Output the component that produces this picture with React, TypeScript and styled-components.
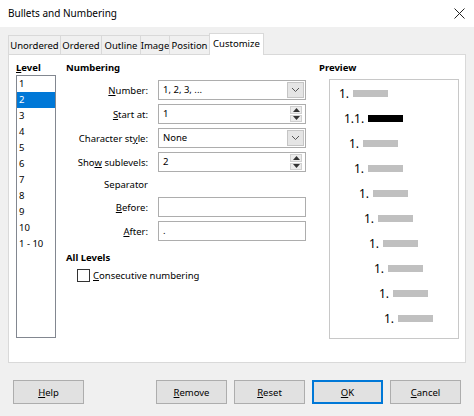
import React from "react";
import styled, { createGlobalStyle } from "styled-components";

const GlobalStyle = createGlobalStyle`
    html, body {
        margin: 0;
        padding: 0;
        background: #f0f0f0;
    }
    body {
        font-family: "Segoe UI", "Noto Sans", "Open Sans", sans-serif;
        font-size: 9.5px;
        color: #000;
    }
`;

const levels = ["1", "2", "3", "4", "5", "6", "7", "8", "9", "10", "1 - 10"];

const tabs = [
    { label: "Unordered", w: 53 },
    { label: "Ordered", w: 42 },
    { label: "Outline", w: 40 },
    { label: "Image", w: 30 },
    { label: "Position", w: 41 },
    { label: "Customize", w: 55, active: true },
];

const previewRows = [
    { text: "1.", indent: 10 },
    { text: "1.1.", indent: 15, dark: true },
    { text: "1.", indent: 20 },
    { text: "1.", indent: 25 },
    { text: "1.", indent: 30 },
    { text: "1.", indent: 35 },
    { text: "1.", indent: 40 },
    { text: "1.", indent: 45 },
    { text: "1.", indent: 50 },
    { text: "1.", indent: 55 },
];

function Chevron() {
    return (
        <svg width="9" height="6" viewBox="0 0 9 6">
            <path d="M1 1 L4.5 4.5 L8 1" fill="none" stroke="#555" strokeWidth="1" />
        </svg>
    );
}

function SpinArrows() {
    return (
        <SpinBox>
            <SpinHalf>
                <svg width="7" height="4" viewBox="0 0 7 4">
                    <path d="M0 4 L3.5 0 L7 4 Z" fill="#333" />
                </svg>
            </SpinHalf>
            <SpinHalf>
                <svg width="7" height="4" viewBox="0 0 7 4">
                    <path d="M0 0 L3.5 4 L7 0 Z" fill="#333" />
                </svg>
            </SpinHalf>
        </SpinBox>
    );
}

function App() {
    return (
        <Window>
            <GlobalStyle />
            <TitleBar>
                <span>Bullets and Numbering</span>
                <CloseIcon>
                    <svg width="11" height="11" viewBox="0 0 11 11">
                        <path d="M0.5 0.5 L10.5 10.5 M10.5 0.5 L0.5 10.5" stroke="#222" strokeWidth="1" />
                    </svg>
                </CloseIcon>
            </TitleBar>
            <Body>
                <TabBar>
                    {tabs.map((t) => (
                        <Tab key={t.label} $w={t.w} $active={!!t.active}>
                            {t.label}
                        </Tab>
                    ))}
                </TabBar>
                <TabPage>
                    <LevelColumn>
                        <BoldLabel>
                            <u>L</u>evel
                        </BoldLabel>
                        <LevelList>
                            {levels.map((l) => (
                                <LevelItem key={l} $selected={l === "2"}>
                                    {l}
                                </LevelItem>
                            ))}
                        </LevelList>
                    </LevelColumn>

                    <NumberingColumn>
                        <BoldLabel>Numbering</BoldLabel>
                        <FormGrid>
                            <FieldLabel>
                                <u>N</u>umber:
                            </FieldLabel>
                            <Field>
                                <FieldText>1, 2, 3, ...</FieldText>
                                <DropButton>
                                    <Chevron />
                                </DropButton>
                            </Field>

                            <FieldLabel>
                                <u>S</u>tart at:
                            </FieldLabel>
                            <Field>
                                <FieldText>1</FieldText>
                                <SpinArrows />
                            </Field>

                            <FieldLabel>
                                Character st<u>y</u>le:
                            </FieldLabel>
                            <Field>
                                <FieldText>None</FieldText>
                                <DropButton>
                                    <Chevron />
                                </DropButton>
                            </Field>

                            <FieldLabel>
                                Sho<u>w</u> sublevels:
                            </FieldLabel>
                            <Field>
                                <FieldText>2</FieldText>
                                <SpinArrows />
                            </Field>

                            <SeparatorLabel>Separator</SeparatorLabel>
                            <span />

                            <FieldLabel>
                                <u>B</u>efore:
                            </FieldLabel>
                            <Field>
                                <FieldText></FieldText>
                            </Field>

                            <FieldLabel>
                                <u>A</u>fter:
                            </FieldLabel>
                            <Field>
                                <FieldText>.</FieldText>
                            </Field>
                        </FormGrid>

                        <AllLevels>All Levels</AllLevels>
                        <CheckRow>
                            <CheckBox />
                            <span>
                                <u>C</u>onsecutive numbering
                            </span>
                        </CheckRow>
                    </NumberingColumn>

                    <PreviewColumn>
                        <BoldLabel>Preview</BoldLabel>
                        <PreviewBox>
                            {previewRows.map((r, i) => (
                                <PreviewRow key={i} $indent={r.indent}>
                                    <PreviewNumber>{r.text}</PreviewNumber>
                                    <PreviewBar $dark={!!r.dark} />
                                </PreviewRow>
                            ))}
                        </PreviewBox>
                    </PreviewColumn>
                </TabPage>
            </Body>
            <ButtonBar>
                <Button>
                    <u>H</u>elp
                </Button>
                <ButtonGroup>
                    <Button>
                        <u>R</u>emove
                    </Button>
                    <Button>
                        <u>R</u>eset
                    </Button>
                    <Button $primary>
                        <u>O</u>K
                    </Button>
                    <Button>
                        <u>C</u>ancel
                    </Button>
                </ButtonGroup>
            </ButtonBar>
        </Window>
    );
}

const Window = styled.div`
    width: 474px;
    height: 416px;
    background: #f0f0f0;
    display: flex;
    flex-direction: column;
    overflow: hidden;
`;

const TitleBar = styled.div`
    height: 28px;
    background: #fff;
    display: flex;
    align-items: center;
    justify-content: space-between;
    padding: 0 8px;
    font-size: 10px;
    flex-shrink: 0;
    margin-top: -1px;
`;

const CloseIcon = styled.div`
    display: flex;
    align-items: center;
    margin-right: 1px;
    margin-top: 1px;
`;

const Body = styled.div`
    padding: 7px 8px 0 8px;
`;

const TabBar = styled.div`
    display: flex;
    align-items: flex-end;
    height: 20px;
    padding-left: 1px;
`;

const Tab = styled.div<{ $w: number; $active: boolean }>`
    width: ${(p) => p.$w}px;
    box-sizing: border-box;
    height: ${(p) => (p.$active ? 22 : 19)}px;
    display: flex;
    align-items: center;
    justify-content: center;
    white-space: nowrap;
    border: 1px solid #d9d9d9;
    border-bottom: none;
    margin-left: -1px;
    background: ${(p) => (p.$active ? "#fff" : "#f0f0f0")};
    position: relative;
    z-index: ${(p) => (p.$active ? 2 : 1)};
    margin-bottom: ${(p) => (p.$active ? "-1px" : "0")};
    padding-bottom: ${(p) => (p.$active ? "2px" : "0")};
`;

const TabPage = styled.div`
    box-sizing: border-box;
    width: 458px;
    height: 309px;
    background: #fff;
    border: 1px solid #d9d9d9;
    display: flex;
    padding: 6px 0 0 7px;
`;

const LevelColumn = styled.div`
    display: flex;
    flex-direction: column;
    width: 40px;
`;

const BoldLabel = styled.div`
    font-weight: bold;
    height: 14px;
    line-height: 14px;
`;

const LevelList = styled.div`
    box-sizing: border-box;
    height: 263px;
    border: 1px solid #828790;
    display: flex;
    flex-direction: column;
`;

const LevelItem = styled.div<{ $selected: boolean }>`
    height: 16px;
    line-height: 16px;
    padding-left: 2px;
    background: ${(p) => (p.$selected ? "#0078d7" : "transparent")};
    color: ${(p) => (p.$selected ? "#fff" : "#000")};
`;

const NumberingColumn = styled.div`
    margin-left: 10px;
    width: 241px;
    display: flex;
    flex-direction: column;
`;

const FormGrid = styled.div`
    display: grid;
    grid-template-columns: 82px 148px;
    column-gap: 10px;
    row-gap: 4px;
    margin-top: 5px;
    align-items: center;
`;

const FieldLabel = styled.div`
    text-align: right;
    white-space: nowrap;
`;

const SeparatorLabel = styled.div`
    text-align: right;
    height: 16px;
    line-height: 16px;
    margin-top: 1px;
`;

const Field = styled.div`
    box-sizing: border-box;
    height: 20px;
    border: 1px solid #adadad;
    background: #fff;
    display: flex;
    align-items: stretch;
`;

const FieldText = styled.div`
    flex: 1;
    padding-left: 4px;
    line-height: 18px;
`;

const DropButton = styled.div`
    width: 17px;
    margin: 1px;
    background: #e5e5e5;
    border: 1px solid #c5c5c5;
    box-sizing: border-box;
    display: flex;
    align-items: center;
    justify-content: center;
`;

const SpinBox = styled.div`
    width: 12px;
    margin: 1px 3px 1px 0;
    display: flex;
    flex-direction: column;
    gap: 1px;
`;

const SpinHalf = styled.div`
    flex: 1;
    background: #ececec;
    border: 1px solid #d0d0d0;
    display: flex;
    align-items: center;
    justify-content: center;
`;

const AllLevels = styled.div`
    font-weight: bold;
    margin-top: 10px;
    height: 14px;
    line-height: 14px;
`;

const CheckRow = styled.div`
    display: flex;
    align-items: center;
    margin-top: 4px;
    margin-left: 11px;
    gap: 3px;
`;

const CheckBox = styled.div`
    width: 13px;
    height: 13px;
    box-sizing: border-box;
    border: 1px solid #333;
    background: #fff;
`;

const PreviewColumn = styled.div`
    margin-left: 12px;
    display: flex;
    flex-direction: column;
`;

const PreviewBox = styled.div`
    box-sizing: border-box;
    margin-top: 4px;
    margin-left: 10px;
    width: 130px;
    height: 260px;
    border: 1px solid #c8c8c8;
    padding-top: 1px;
    display: flex;
    flex-direction: column;
`;

const PreviewRow = styled.div<{ $indent: number }>`
    height: 25px;
    flex-shrink: 0;
    display: flex;
    align-items: center;
    gap: 4px;
    padding-left: ${(p) => p.$indent - 1}px;
`;

const PreviewNumber = styled.span`
    font-size: 12px;
    color: #000;
`;

const PreviewBar = styled.div<{ $dark: boolean }>`
    width: 35px;
    height: 7px;
    margin-top: -1px;
    background: ${(p) => (p.$dark ? "#000" : "#c0c0c0")};
`;

const ButtonBar = styled.div`
    display: flex;
    justify-content: space-between;
    padding: 17px 13px 0 13px;
`;

const ButtonGroup = styled.div`
    display: flex;
    gap: 7px;
`;

const Button = styled.button<{ $primary?: boolean }>`
    width: 71px;
    height: 24px;
    box-sizing: border-box;
    font-family: inherit;
    font-size: 9.5px;
    color: #000;
    background: #e1e1e1;
    border: 1px solid ${(p) => (p.$primary ? "#0078d7" : "#adadad")};
    box-shadow: ${(p) => (p.$primary ? "inset 0 0 0 1px #0078d7" : "none")};
    padding: 0;
`;

export default App;
